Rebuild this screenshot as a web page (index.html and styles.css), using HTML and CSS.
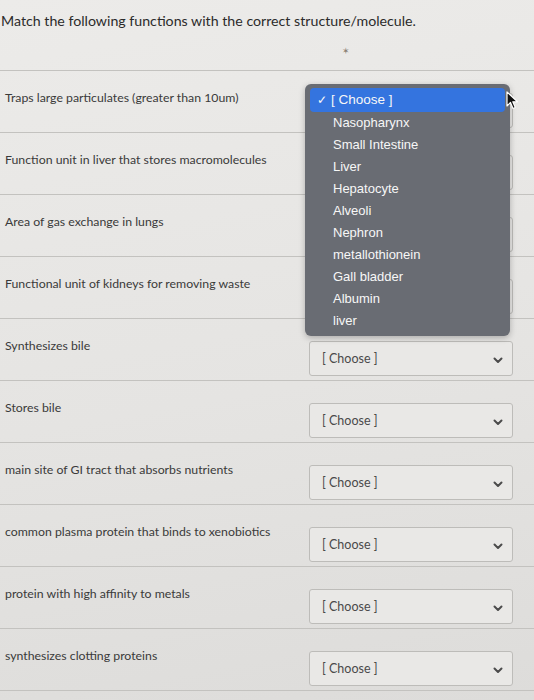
FILE: index.html
```html
<!DOCTYPE html>
<html lang="en">
<head>
  <meta charset="UTF-8">
  <title>Matching question</title>
  <link rel="stylesheet" href="styles.css">
</head>
<body>
  <div class="question">
    <div class="question-head">
      <p class="question-text">Match the following functions with the correct structure/molecule.</p>
      <span class="mark">&#x2736;</span>
    </div>

    <div class="answers">
      <div class="answer-row">
        <div class="prompt">Traps large particulates (greater than 10um)</div>
        <div class="select"><span>[ Choose ]</span><svg class="chevron" width="10" height="7" viewBox="0 0 10 7"><polyline points="1.5,1.5 5,5 8.5,1.5"/></svg></div>
      </div>
      <div class="answer-row">
        <div class="prompt">Function unit in liver that stores macromolecules</div>
        <div class="select"><span>[ Choose ]</span><svg class="chevron" width="10" height="7" viewBox="0 0 10 7"><polyline points="1.5,1.5 5,5 8.5,1.5"/></svg></div>
      </div>
      <div class="answer-row">
        <div class="prompt">Area of gas exchange in lungs</div>
        <div class="select"><span>[ Choose ]</span><svg class="chevron" width="10" height="7" viewBox="0 0 10 7"><polyline points="1.5,1.5 5,5 8.5,1.5"/></svg></div>
      </div>
      <div class="answer-row">
        <div class="prompt">Functional unit of kidneys for removing waste</div>
        <div class="select"><span>[ Choose ]</span><svg class="chevron" width="10" height="7" viewBox="0 0 10 7"><polyline points="1.5,1.5 5,5 8.5,1.5"/></svg></div>
      </div>
      <div class="answer-row">
        <div class="prompt">Synthesizes bile</div>
        <div class="select"><span>[ Choose ]</span><svg class="chevron" width="10" height="7" viewBox="0 0 10 7"><polyline points="1.5,1.5 5,5 8.5,1.5"/></svg></div>
      </div>
      <div class="answer-row">
        <div class="prompt">Stores bile</div>
        <div class="select"><span>[ Choose ]</span><svg class="chevron" width="10" height="7" viewBox="0 0 10 7"><polyline points="1.5,1.5 5,5 8.5,1.5"/></svg></div>
      </div>
      <div class="answer-row">
        <div class="prompt">main site of GI tract that absorbs nutrients</div>
        <div class="select"><span>[ Choose ]</span><svg class="chevron" width="10" height="7" viewBox="0 0 10 7"><polyline points="1.5,1.5 5,5 8.5,1.5"/></svg></div>
      </div>
      <div class="answer-row">
        <div class="prompt">common plasma protein that binds to xenobiotics</div>
        <div class="select"><span>[ Choose ]</span><svg class="chevron" width="10" height="7" viewBox="0 0 10 7"><polyline points="1.5,1.5 5,5 8.5,1.5"/></svg></div>
      </div>
      <div class="answer-row">
        <div class="prompt">protein with high affinity to metals</div>
        <div class="select"><span>[ Choose ]</span><svg class="chevron" width="10" height="7" viewBox="0 0 10 7"><polyline points="1.5,1.5 5,5 8.5,1.5"/></svg></div>
      </div>
      <div class="answer-row">
        <div class="prompt">synthesizes clotting proteins</div>
        <div class="select"><span>[ Choose ]</span><svg class="chevron" width="10" height="7" viewBox="0 0 10 7"><polyline points="1.5,1.5 5,5 8.5,1.5"/></svg></div>
      </div>
    </div>
  </div>

  <!-- open native popup for the first select -->
  <ul class="popup">
    <li class="selected"><span class="check">&#10003;</span>[ Choose ]</li>
    <li>Nasopharynx</li>
    <li>Small Intestine</li>
    <li>Liver</li>
    <li>Hepatocyte</li>
    <li>Alveoli</li>
    <li>Nephron</li>
    <li>metallothionein</li>
    <li>Gall bladder</li>
    <li>Albumin</li>
    <li>liver</li>
  </ul>

  <svg class="cursor" width="13" height="19" viewBox="0 0 13 19">
    <path d="M1 1 L1 15 L4.5 11.5 L7 17.5 L9.3 16.5 L6.8 10.8 L11.5 10.8 Z" fill="#111" stroke="#fff" stroke-width="1.2" stroke-linejoin="round"/>
  </svg>
</body>
</html>
```

FILE: styles.css
```css
body {
  margin: 0;
  height: 700px;
  overflow: hidden;
  font-family: Lato, "Open Sans", sans-serif;
  background: linear-gradient(170deg, #ecebe9 0%, #e5e4e2 55%, #dddcda 100%);
  color: #3b3b3b;
}

.question-head {
  height: 70px;
  position: relative;
}
.question-text {
  margin: 0;
  padding: 11px 0 0 1px;
  font-size: 14.2px;
  line-height: 20px;
  color: #2b2b2b;
}
.mark {
  position: absolute;
  left: 342px;
  top: 45px;
  font-size: 9px;
  color: #8a8073;
}

.answers {
  border-top: 1px solid #c3c2bf;
}
.answer-row {
  display: flex;
  height: 61px;
  border-bottom: 1px solid #c3c2bf;
}
.prompt {
  flex: 1;
  padding: 19px 0 0 5px;
  font-size: 12.3px;
  line-height: 16px;
  color: #3a3a3a;
}

.select {
  display: flex;
  align-items: center;
  justify-content: space-between;
  box-sizing: border-box;
  width: 204px;
  height: 35px;
  margin: 22px 21px 0 0;
  padding: 0 9px 0 12px;
  border: 1px solid #bdbcb9;
  border-radius: 3px;
  background: #e9e8e6;
  font-size: 12.5px;
  color: #4a4a4a;
}
.chevron {
  margin-top: 4px;
}
.chevron polyline {
  fill: none;
  stroke: #4b4b4b;
  stroke-width: 2;
  stroke-linecap: round;
  stroke-linejoin: round;
}

.popup {
  position: absolute;
  left: 305px;
  top: 84px;
  width: 205px;
  box-sizing: border-box;
  margin: 0;
  padding: 4px 5px 4px 5px;
  list-style: none;
  background: #696c73;
  border-radius: 6px;
  box-shadow: 0 2px 6px rgba(0, 0, 0, 0.25);
  font-family: "Liberation Sans", Arial, sans-serif;
  font-size: 13px;
  color: #f7f7f7;
}
.popup li {
  height: 22px;
  line-height: 22px;
  padding-left: 23px;
}
.popup li.selected {
  position: relative;
  height: 24px;
  line-height: 24px;
  padding-left: 21px;
  background: #3474df;
  border-radius: 4px;
  font-size: 13.5px;
}
.check {
  position: absolute;
  left: 7px;
  font-size: 12px;
}

.cursor {
  position: absolute;
  left: 506px;
  top: 91px;
}
```
